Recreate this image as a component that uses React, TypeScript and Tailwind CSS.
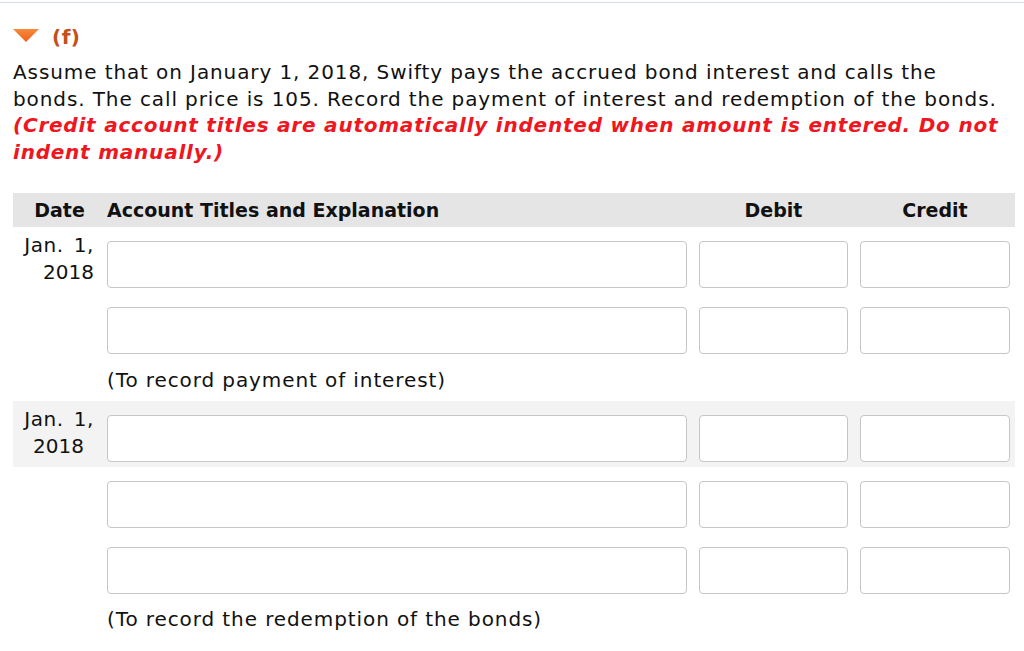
const font = { fontFamily: '"DejaVu Sans", Verdana, sans-serif' };

const Field = ({ className = '' }: { className?: string }) => (
  <div className={`h-[47px] rounded-[4px] border border-[#c6c6c6] bg-white ${className}`} />
);

const EntryRow = ({
  date,
  shaded = false,
  offset = false,
}: {
  date?: boolean;
  shaded?: boolean;
  offset?: boolean;
}) => (
  <div className={`flex h-[66px] pt-[14px] ${shaded ? 'bg-[#f3f3f3]' : ''}`}>
    <div className="-mt-[9px] w-[94px] shrink-0 pr-[13px] text-right text-[20px] leading-[27px] text-[#111]">
      {date && (
        <>
          <div className="tracking-[0.6px] [word-spacing:3px]">Jan. 1,</div>
          <div className={offset ? 'pr-[10px]' : ''}>2018</div>
        </>
      )}
    </div>
    <Field className="w-[580px]" />
    <Field className="ml-[12px] w-[149px]" />
    <Field className="ml-[12px] w-[150px]" />
  </div>
);

const Memo = ({ text, height }: { text: string; height: string }) => (
  <div className={`flex items-center ${height}`}>
    <div className="w-[94px] shrink-0" />
    <span className="text-[20px] tracking-[0.9px] text-[#111]">{text}</span>
  </div>
);

export default function App() {
  return (
    <div className="h-[651px] w-[1024px] overflow-hidden bg-white" style={font}>
      <div className="h-[3px] border-b border-[#d6dce6]" />

      <div className="mt-[24px] flex h-[20px] items-center gap-[13px] pl-[13px]">
        <svg width="26" height="14" viewBox="0 0 26 14" className="-mt-[2px]">
          <defs>
            <linearGradient id="tri" x1="0" y1="0" x2="0" y2="1">
              <stop offset="0" stopColor="#f98a3c" />
              <stop offset="1" stopColor="#ef5f1c" />
            </linearGradient>
          </defs>
          <polygon points="0,0 26,0 13,13" fill="url(#tri)" />
        </svg>
        <span className="text-[20px] font-bold tracking-[0.5px] text-[#c44f1b]">(f)</span>
      </div>

      <div className="mt-[12px] whitespace-nowrap px-[13px] text-[20px] leading-[26.5px] tracking-[0.9px] text-[#111]">
        <p>
          Assume that on January 1, 2018, Swifty pays the accrued bond interest and calls the
          <br />
          bonds. The call price is 105. Record the payment of interest and redemption of the bonds.
        </p>
        <p className="font-bold italic tracking-[0.78px] text-[#ee1620]">
          (Credit account titles are automatically indented when amount is entered. Do not
          <br />
          indent manually.)
        </p>
      </div>

      <div className="ml-[13px] mt-[28px] w-[1002px]">
        <div className="flex h-[34px] items-center bg-[#e5e5e5] text-[19px] font-bold text-[#111]">
          <div className="w-[94px] shrink-0 pr-[1px] text-center">Date</div>
          <div className="w-[580px]">Account Titles and Explanation</div>
          <div className="ml-[12px] w-[149px] text-center">Debit</div>
          <div className="ml-[12px] w-[150px] text-center">Credit</div>
        </div>

        <EntryRow date />
        <EntryRow />
        <Memo text="(To record payment of interest)" height="h-[42px]" />
        <EntryRow date shaded offset />
        <EntryRow />
        <EntryRow />
        <Memo text="(To record the redemption of the bonds)" height="h-[40px]" />
      </div>
    </div>
  );
}
